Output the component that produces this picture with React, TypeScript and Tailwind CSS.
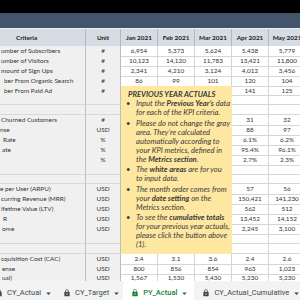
import React from 'react';
import { MdLock, MdArrowDropDown } from 'react-icons/md';

type Row = { label: string; pl: string; unit: string; vals: string[] };

const blank = ['', '', '', '', ''];

const rows: Row[] = [
  { label: 'umber of Subscribers', pl: 'pl-[1px]', unit: '#', vals: ['6,954', '5,373', '5,624', '5,438', '5,779'] },
  { label: 'umber of Visitors', pl: 'pl-[1px]', unit: '#', vals: ['10,123', '14,120', '11,783', '13,421', '11,800'] },
  { label: 'mount of Sign Ups', pl: 'pl-[1px]', unit: '#', vals: ['2,341', '4,210', '3,124', '4,012', '3,456'] },
  { label: 'ber From Organic Search', pl: 'pl-[4px]', unit: '#', vals: ['86', '99', '101', '120', '104'] },
  { label: 'ber From Paid Ad', pl: 'pl-[4px]', unit: '#', vals: ['', '', '', '141', '125'] },
  { label: '', pl: 'pl-0', unit: '', vals: blank },
  { label: '', pl: 'pl-0', unit: '', vals: blank },
  { label: 'Churned Customers', pl: 'pl-[1px]', unit: '#', vals: ['', '', '', '31', '32'] },
  { label: 'nse', pl: 'pl-0', unit: 'USD', vals: ['', '', '', '88', '97'] },
  { label: 'Rate', pl: 'pl-[3px]', unit: '%', vals: ['', '', '', '6.1%', '6.2%'] },
  { label: 'ate', pl: 'pl-[2px]', unit: '%', vals: ['', '', '', '95.4%', '96.1%'] },
  { label: '', pl: 'pl-0', unit: '%', vals: ['', '', '', '2.7%', '2.3%'] },
  { label: '', pl: 'pl-0', unit: '', vals: blank },
  { label: '', pl: 'pl-0', unit: '', vals: blank },
  { label: 'e per User (ARPU)', pl: 'pl-0', unit: 'USD', vals: ['', '', '', '57', '56'] },
  { label: 'curring Revenue (MRR)', pl: 'pl-[1px]', unit: 'USD', vals: ['', '', '', '150,421', '141,230'] },
  { label: 'ifetime Value (LTV)', pl: 'pl-[1px]', unit: 'USD', vals: ['', '', '', '562', '512'] },
  { label: 'R', pl: 'pl-[3px]', unit: 'USD', vals: ['', '', '', '13,452', '14,152'] },
  { label: 'ome', pl: 'pl-[2px]', unit: 'USD', vals: ['', '', '', '2,245', '3,100'] },
  { label: '', pl: 'pl-0', unit: '', vals: blank },
  { label: '', pl: 'pl-0', unit: '', vals: blank },
  { label: 'cquisition Cost (CAC)', pl: 'pl-[1px]', unit: 'USD', vals: ['2.4', '3.1', '3.6', '2.4', '2.6'] },
  { label: 'ense', pl: 'pl-[2px]', unit: 'USD', vals: ['800', '856', '854', '963', '1,023'] },
  { label: 'ual)', pl: 'pl-[2px]', unit: 'USD', vals: ['1,567', '1,530', '5,430', '5,230', '5,230'] },
];

const months = ['Jan 2021', 'Feb 2021', 'Mar 2021', 'Apr 2021', 'May 2021'];

const tabs = [
  { name: 'CY_Actual', active: false },
  { name: 'CY_Target', active: false },
  { name: 'PY_Actual', active: true },
  { name: 'CY_Actual_Cumulative', active: false },
];

const grid = 'grid grid-cols-[86px_35px_37px_37px_37px_37px_37px]';

export default function App() {
  return (
    <div className="relative w-[300px] h-[300px] overflow-hidden bg-white flex flex-col font-['Lato',sans-serif]">
      {/* top bars */}
      <div className="h-[13px] bg-black shrink-0"></div>
      <div className="h-[15px] bg-[#44546a] shrink-0"></div>

      {/* header row */}
      <div className={`${grid} h-[18px] shrink-0 bg-[#d6dce4] border-t border-[#eef0f3] text-[6.4px] font-bold text-[#222]`}>
        <div className="flex items-center pl-[16px] border-r border-[#b4b9c1]">Criteria</div>
        <div className="flex items-center justify-center border-r border-[#b4b9c1]">Unit</div>
        {months.map((m) => (
          <div key={m} className="flex items-center justify-center border-r border-[#b4b9c1] whitespace-nowrap">
            {m}
          </div>
        ))}
      </div>

      {/* body */}
      <div className="flex-1 overflow-hidden text-[6.4px] text-[#333]">
        {rows.map((r, i) => (
          <div key={i} className={`${grid} h-[9.9px] leading-[9.9px]`}>
            <div className={`bg-[#f0f0f0] border-r border-b border-r-[#bdbdbd] border-b-[#d9d9d9] whitespace-nowrap overflow-hidden ${r.pl}`}>
              {r.label}
            </div>
            <div className="bg-[#f0f0f0] border-r border-b border-r-[#bdbdbd] border-b-[#d9d9d9] text-center">{r.unit}</div>
            {r.vals.map((v, j) => (
              <div key={j} className="border-r border-b border-[#d6d6d6] text-center whitespace-nowrap">
                {v}
              </div>
            ))}
          </div>
        ))}
      </div>

      {/* note box over the grid */}
      <div className="absolute left-[121px] top-[86px] w-[111px] h-[168px] bg-[#fde7a1] pt-[4px] pl-[5px] text-[7.6px] leading-[9px] italic text-[#3a3a3a] whitespace-nowrap overflow-hidden">
        <p className="font-bold ml-[2px]">PREVIOUS YEAR ACTUALS</p>
        <div className="flex flex-col gap-[1.5px]">
          <Bullet>
            Input the <b>Previous Year’s</b> data
            <br />
            for each of the KPI criteria.
          </Bullet>
          <Bullet>
            Please do not change the gray
            <br />
            area. They’re calculated
            <br />
            automatically according to
            <br />
            your KPI metrics, defined in
            <br />
            the <b>Metrics section</b>.
          </Bullet>
          <Bullet>
            The <b>white areas</b> are for you
            <br />
            to input data.
          </Bullet>
          <Bullet>
            The month order comes from
            <br />
            your <b>date setting</b> on the
            <br />
            Metrics section.
          </Bullet>
          <Bullet>
            To see the <b>cumulative totals</b>
            <br />
            for your previous year actuals,
            <br />
            please click the button above
            <br />
            (1).
          </Bullet>
        </div>
      </div>

      {/* sheet tabs */}
      <div className="h-[19px] shrink-0 bg-[#f1f3f4] flex font-['Roboto',sans-serif] text-[7.5px] text-[#444746]">
        {tabs.map((t, i) => (
          <div
            key={t.name}
            className={`flex items-center h-full pt-[5px] pl-[8px] pr-[1px] ${
              t.active ? 'bg-white text-[#188038] font-medium pr-[4px]' : ''
            } ${i === 0 ? 'ml-[-13px]' : ''}`}
          >
            <MdLock className="w-[8px] h-[8px] shrink-0" />
            <span className="ml-[4px] whitespace-nowrap">{t.name}</span>
            <MdArrowDropDown className="ml-[2px] w-[11px] h-[11px] shrink-0" />
          </div>
        ))}
      </div>
    </div>
  );
}

function Bullet({ children }: { children: React.ReactNode }) {
  return (
    <div className="flex">
      <span className="w-[10px] not-italic">•</span>
      <span>{children}</span>
    </div>
  );
}
